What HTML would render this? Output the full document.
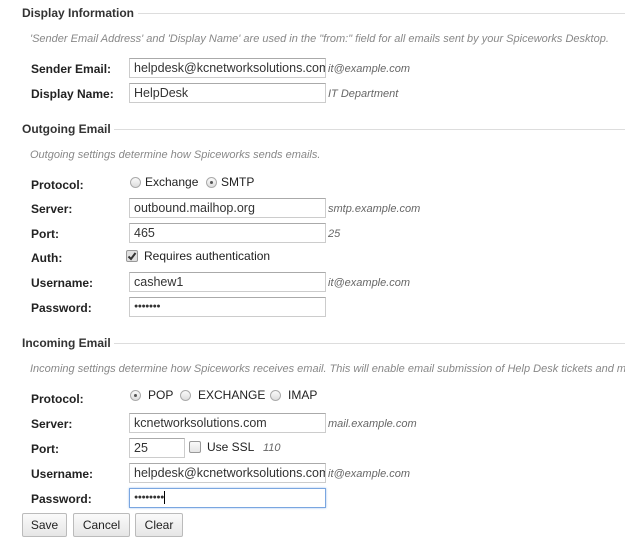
<!DOCTYPE html>
<html><head><style>
body{margin:0;width:625px;height:540px;background:#fff;font-family:"Liberation Sans",Arial,sans-serif;position:relative;overflow:hidden;color:#222}
.a{position:absolute;white-space:nowrap}
.h{font-size:12px;font-weight:bold;color:#333}
.line{position:absolute;height:1px;background:#ddd;right:0}
.note{font-size:11px;font-style:italic;color:#888}
.lbl{font-size:12px;font-weight:bold;color:#222}
.inp{position:absolute;height:20px;border:1px solid #ccc;border-top-color:#aaa;box-sizing:border-box;font-size:12.5px;line-height:18px;padding-left:4px;overflow:hidden;white-space:nowrap;color:#333;background:#fff}
.pw{font-size:7px;letter-spacing:-0.5px}
.hint{font-size:11px;font-style:italic;color:#666}
.rad{position:absolute;width:11px;height:11px;border:1px solid #aaa;border-radius:50%;background:linear-gradient(#fafafa,#ddd);box-sizing:border-box}
.rad.on::after{content:"";position:absolute;left:3px;top:3px;width:3px;height:3px;border-radius:50%;background:#555}
.t{font-size:12px;color:#222}
.chk{position:absolute;width:12px;height:12px;border:1px solid #999;box-sizing:border-box;background:linear-gradient(#fafafa,#e5e5e5);border-radius:2px}
.btn{position:absolute;top:513px;height:24px;border:1px solid #bbb;border-radius:2px;background:linear-gradient(#fafafa,#e6e6e6);box-sizing:border-box;font-size:12px;text-align:center;line-height:22px;color:#222}
</style></head><body>
<div class="a h" style="left:22px;top:6px">Display Information</div><div class="line" style="left:138px;top:13px"></div>
<div class="a note" style="left:30px;top:33px">'Sender Email Address' and 'Display Name' are used in the "from:" field for all emails sent by your Spiceworks Desktop.</div>
<div class="a lbl" style="left:31px;top:62px">Sender Email:</div>
<div class="inp" style="left:129px;top:58px;width:197px">helpdesk@kcnetworksolutions.com</div>
<div class="a hint" style="left:328px;top:63px">it@example.com</div>
<div class="a lbl" style="left:31px;top:87px">Display Name:</div>
<div class="inp" style="left:129px;top:83px;width:197px">HelpDesk</div>
<div class="a hint" style="left:328px;top:88px">IT Department</div>

<div class="a h" style="left:22px;top:122px">Outgoing Email</div><div class="line" style="left:114px;top:129px"></div>
<div class="a note" style="left:30px;top:149px">Outgoing settings determine how Spiceworks sends emails.</div>
<div class="a lbl" style="left:31px;top:178px">Protocol:</div>
<div class="rad" style="left:130px;top:177px"></div><div class="a t" style="left:145px;top:175px">Exchange</div>
<div class="rad on" style="left:206px;top:177px"></div><div class="a t" style="left:221px;top:175px">SMTP</div>
<div class="a lbl" style="left:31px;top:202px">Server:</div>
<div class="inp" style="left:129px;top:198px;width:197px">outbound.mailhop.org</div>
<div class="a hint" style="left:328px;top:203px">smtp.example.com</div>
<div class="a lbl" style="left:31px;top:227px">Port:</div>
<div class="inp" style="left:129px;top:223px;width:197px">465</div>
<div class="a hint" style="left:328px;top:228px">25</div>
<div class="a lbl" style="left:31px;top:251px">Auth:</div>
<div class="chk" style="left:126px;top:250px;background:#e0e0e0"></div>
<svg class="a" style="left:126px;top:250px" width="12" height="12"><path d="M2.5 6.5 L5 9 L9.5 3" stroke="#333" stroke-width="2" fill="none"/></svg>
<div class="a t" style="left:144px;top:249px">Requires authentication</div>
<div class="a lbl" style="left:31px;top:276px">Username:</div>
<div class="inp" style="left:129px;top:272px;width:197px">cashew1</div>
<div class="a hint" style="left:328px;top:277px">it@example.com</div>
<div class="a lbl" style="left:31px;top:301px">Password:</div>
<div class="inp pw" style="left:129px;top:297px;width:197px">●●●●●●●</div>

<div class="a h" style="left:22px;top:336px">Incoming Email</div><div class="line" style="left:114px;top:343px"></div>
<div class="a note" style="left:30px;top:363px">Incoming settings determine how Spiceworks receives email. This will enable email submission of Help Desk tickets and more.</div>
<div class="a lbl" style="left:31px;top:392px">Protocol:</div>
<div class="rad on" style="left:130px;top:390px"></div><div class="a t" style="left:148px;top:388px">POP</div>
<div class="rad" style="left:180px;top:390px"></div><div class="a t" style="left:198px;top:388px">EXCHANGE</div>
<div class="rad" style="left:270px;top:390px"></div><div class="a t" style="left:288px;top:388px">IMAP</div>
<div class="a lbl" style="left:31px;top:417px">Server:</div>
<div class="inp" style="left:129px;top:413px;width:197px">kcnetworksolutions.com</div>
<div class="a hint" style="left:328px;top:418px">mail.example.com</div>
<div class="a lbl" style="left:31px;top:442px">Port:</div>
<div class="inp" style="left:129px;top:438px;width:56px">25</div>
<div class="chk" style="left:189px;top:441px"></div>
<div class="a t" style="left:207px;top:440px">Use SSL</div>
<div class="a hint" style="left:263px;top:442px">110</div>
<div class="a lbl" style="left:31px;top:467px">Username:</div>
<div class="inp" style="left:129px;top:463px;width:197px">helpdesk@kcnetworksolutions.com</div>
<div class="a hint" style="left:328px;top:468px">it@example.com</div>
<div class="a lbl" style="left:31px;top:492px">Password:</div>
<div class="inp pw" style="left:129px;top:488px;width:197px;border:1px solid #7aa6e0;box-shadow:0 0 2px #9cc0ef">●●●●●●●●<span style="display:inline-block;width:1px;height:13px;background:#000;vertical-align:middle"></span></div>

<div class="btn" style="left:22px;width:45px">Save</div>
<div class="btn" style="left:73px;width:57px">Cancel</div>
<div class="btn" style="left:135px;width:48px">Clear</div>
</body></html>
